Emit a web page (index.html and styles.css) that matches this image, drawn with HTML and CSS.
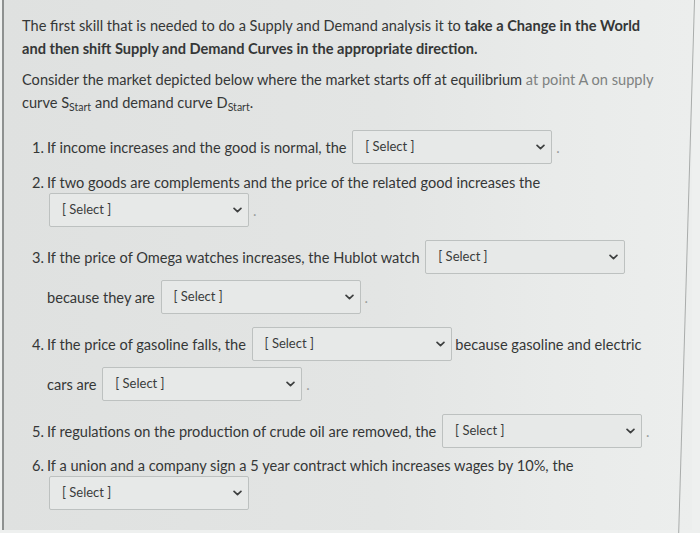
FILE: index.html
```html
<!DOCTYPE html>
<html lang="en">
<head>
<meta charset="utf-8">
<title>Supply and Demand</title>
<link rel="stylesheet" href="styles.css">
</head>
<body>
<div class="panel">
  <p class="intro first">The first skill that is needed to do a Supply and Demand analysis it to <strong>take a Change in the World and then shift Supply and Demand Curves in the appropriate direction.</strong></p>
  <p class="intro second">Consider the market depicted below where the market starts off at equilibrium <span class="glare">at point A on supply</span> curve S<sub>Start</sub> and demand curve D<sub>Start</sub>.</p>

  <ol class="questions">
    <li class="q">
      <span class="num">1.</span>
      <div class="body">
        <div class="row">If income increases and the good is normal, the <span class="select"><span>[ Select ]</span><svg viewBox="0 0 10 6" class="chev"><path d="M1.2 1.2 L5 4.8 L8.8 1.2"/></svg></span><span class="dot">.</span></div>
      </div>
    </li>
    <li class="q text-first">
      <span class="num">2.</span>
      <div class="body">
        <div class="row text">If two goods are complements and the price of the related good increases the</div>
        <div class="row after-text"><span class="select"><span>[ Select ]</span><svg viewBox="0 0 10 6" class="chev"><path d="M1.2 1.2 L5 4.8 L8.8 1.2"/></svg></span><span class="dot">.</span></div>
      </div>
    </li>
    <li class="q">
      <span class="num">3.</span>
      <div class="body">
        <div class="row">If the price of Omega watches increases, the Hublot watch <span class="select"><span>[ Select ]</span><svg viewBox="0 0 10 6" class="chev"><path d="M1.2 1.2 L5 4.8 L8.8 1.2"/></svg></span></div>
        <div class="row next">because they are <span class="select"><span>[ Select ]</span><svg viewBox="0 0 10 6" class="chev"><path d="M1.2 1.2 L5 4.8 L8.8 1.2"/></svg></span><span class="dot">.</span></div>
      </div>
    </li>
    <li class="q">
      <span class="num">4.</span>
      <div class="body">
        <div class="row">If the price of gasoline falls, the <span class="select"><span>[ Select ]</span><svg viewBox="0 0 10 6" class="chev"><path d="M1.2 1.2 L5 4.8 L8.8 1.2"/></svg></span> because gasoline and electric</div>
        <div class="row next">cars are <span class="select"><span>[ Select ]</span><svg viewBox="0 0 10 6" class="chev"><path d="M1.2 1.2 L5 4.8 L8.8 1.2"/></svg></span><span class="dot">.</span></div>
      </div>
    </li>
    <li class="q">
      <span class="num">5.</span>
      <div class="body">
        <div class="row">If regulations on the production of crude oil are removed, the <span class="select"><span>[ Select ]</span><svg viewBox="0 0 10 6" class="chev"><path d="M1.2 1.2 L5 4.8 L8.8 1.2"/></svg></span><span class="dot">.</span></div>
      </div>
    </li>
    <li class="q text-first last">
      <span class="num">6.</span>
      <div class="body">
        <div class="row text">If a union and a company sign a 5 year contract which increases wages by 10%, the</div>
        <div class="row after-text"><span class="select"><span>[ Select ]</span><svg viewBox="0 0 10 6" class="chev"><path d="M1.2 1.2 L5 4.8 L8.8 1.2"/></svg></span></div>
      </div>
    </li>
  </ol>
</div>
</body>
</html>
```

FILE: styles.css
```css
* { box-sizing: border-box; }

html, body {
  margin: 0;
  height: 100%;
}

body {
  background: #eef0ef;
  font-family: Lato, "Open Sans", sans-serif;
  color: #353737;
  overflow: hidden;
}

.panel {
  position: relative;
  height: 530px;
  margin-left: 2px;
  border-left: 2px solid #8e9190;
  padding: 14px 0 0 18px;
  background: linear-gradient(to right, #dfe1e0 0%, #e3e5e4 55%, #e9ebea 80%, #eceeed 100%);
  width: 690px;
}

.panel::after {
  content: "";
  position: absolute;
  top: 0;
  left: 690px;
  width: 1px;
  height: 533px;
  background: #a9acab;
  transform-origin: top left;
  transform: skewX(-1.7deg);
}

.intro {
  margin: 0;
  font-size: 14.6px;
  line-height: 23px;
}

.intro.first {
  max-width: 632px;
}

.intro.second {
  max-width: 648px;
  margin-top: 8px;
}

.glare {
  color: #7e8281;
}

sub {
  font-size: 10.5px;
  vertical-align: -3px;
  line-height: 0;
}

.questions {
  list-style: none;
  margin: 16px 0 0;
  padding: 0 0 0 10px;
  font-size: 14.6px;
}

.q {
  display: flex;
  align-items: baseline;
  margin-top: 13px;
}

.q:first-child {
  margin-top: 0;
}

.q.text-first {
  margin-top: 7px;
}

.q.last {
  margin-top: 6px;
}

.num {
  width: 15px;
  flex: none;
}

.body {
  display: flex;
  flex-direction: column;
}

.row {
  display: flex;
  align-items: center;
  min-height: 34px;
  white-space: pre;
}

.row.text {
  min-height: 23px;
}

.row.after-text {
  margin-top: -1px;
}

.q.last .row.after-text {
  margin-top: -1px;
}

.row.next {
  margin-top: 6px;
}

.select {
  display: inline-flex;
  align-items: center;
  justify-content: space-between;
  width: 200px;
  height: 34px;
  margin-left: 2px;
  padding: 0 6px 0 12px;
  border: 1px solid #bdc1c0;
  border-radius: 2px;
  background: #e7e9e8;
  font-size: 13px;
  color: #3a3c3c;
}

.select > span {
  margin-top: -3px;
}

.chev {
  width: 9px;
  height: 6px;
  fill: none;
  stroke: #3d3f3f;
  stroke-width: 1.9;
  stroke-linecap: round;
  stroke-linejoin: round;
}

.dot {
  margin-left: 4px;
  color: #9a9d9c;
}
```
